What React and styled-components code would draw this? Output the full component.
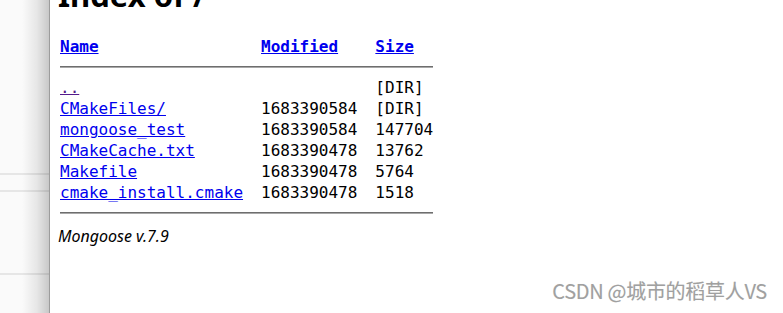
import styled, { createGlobalStyle } from "styled-components";

const GlobalStyle = createGlobalStyle`
  html, body {
    margin: 0;
    padding: 0;
    background: #ffffff;
    overflow: hidden;
  }
`;

const Screen = styled.div`
  display: flex;
  width: 783px;
  height: 313px;
  position: relative;
  overflow: hidden;
`;

const Backdrop = styled.div`
  flex: none;
  width: 49px;
  position: relative;
  background: #fafafa;
  border-right: 1px solid #9c9c9c;
  display: flex;
  flex-direction: column;
  padding-top: 173px;

  &::after {
    content: "";
    position: absolute;
    inset: 0;
    background: linear-gradient(to right, rgba(0, 0, 0, 0) 45%, rgba(0, 0, 0, 0.08) 75%, rgba(0, 0, 0, 0.2) 100%);
  }
`;

const BackLine = styled.div`
  height: 2px;
  background: #e6e6e6;
  margin-bottom: ${p => p.$gap}px;
`;

const Page = styled.div`
  flex: 1;
  overflow: hidden;
  padding: 0 8px;
  font-family: "Noto Sans", sans-serif;
  font-size: 16px;
  color: #000;
`;

const Content = styled.div`
  margin-top: -26px;
`;

const Title = styled.h1`
  font-size: 31px;
  font-weight: bold;
  margin: 0 0 19px;
`;

const Listing = styled.table`
  border-spacing: 2px;

  th, td {
    text-align: left;
    padding: 0 16px 0 0;
    font-family: "DejaVu Sans Mono", monospace;
    font-size: 16px;
    line-height: 19px;
  }

  a {
    color: #0000ee;
  }

  a.visited {
    color: #551a8b;
  }
`;

const Rule = styled.hr`
  border: none;
  border-top: 1px solid #6e6e6e;
  border-bottom: 1px solid #a8a8a8;
  margin: 8px 0;
`;

const Address = styled.address`
  font-style: italic;
  margin-top: 1px;
`;

const Watermark = styled.div`
  position: absolute;
  right: 16px;
  bottom: 8px;
  font-family: "Noto Sans CJK SC", sans-serif;
  font-size: 20px;
  color: #a0a0a0;
  letter-spacing: -0.3px;
  text-shadow: 0 0 1px rgba(0, 0, 0, 0.1);
`;

const rows = [
  { name: "..", mod: "", size: "[DIR]", visited: true },
  { name: "CMakeFiles/", mod: "1683390584", size: "[DIR]" },
  { name: "mongoose_test", mod: "1683390584", size: "147704" },
  { name: "CMakeCache.txt", mod: "1683390478", size: "13762" },
  { name: "Makefile", mod: "1683390478", size: "5764" },
  { name: "cmake_install.cmake", mod: "1683390478", size: "1518" },
];

export default function App() {
  return (
    <Screen>
      <GlobalStyle />
      <Backdrop>
        <BackLine $gap={15} />
        <BackLine $gap={81} />
        <BackLine $gap={0} />
      </Backdrop>
      <Page>
        <Content>
          <Title>Index of /</Title>
          <Listing cellPadding="0">
            <thead>
              <tr>
                <th><a href="#">Name</a></th>
                <th><a href="#">Modified</a></th>
                <th><a href="#">Size</a></th>
              </tr>
              <tr><td colSpan="3"><Rule /></td></tr>
            </thead>
            <tbody>
              {rows.map(r => (
                <tr key={r.name}>
                  <td><a href="#" className={r.visited ? "visited" : ""}>{r.name}</a></td>
                  <td>{r.mod}</td>
                  <td>{r.size}</td>
                </tr>
              ))}
            </tbody>
            <tfoot>
              <tr><td colSpan="3"><Rule /></td></tr>
            </tfoot>
          </Listing>
          <Address>Mongoose v.7.9</Address>
        </Content>
      </Page>
      <Watermark>CSDN @城市的稻草人VS</Watermark>
    </Screen>
  );
}
